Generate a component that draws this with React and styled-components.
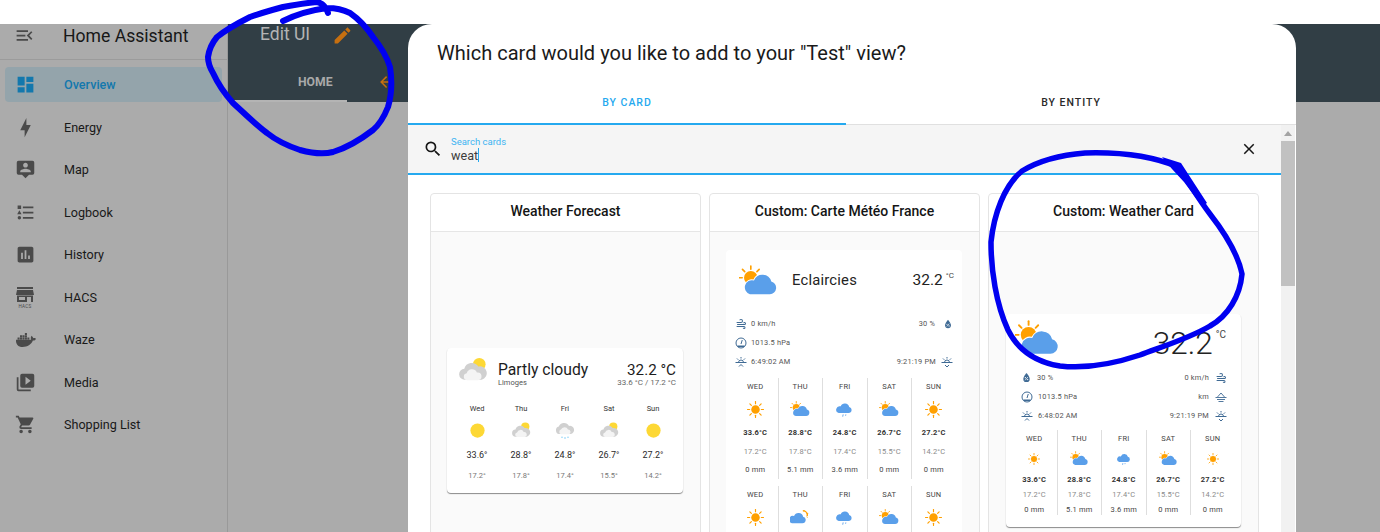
import React from "react";
import styled, { createGlobalStyle } from "styled-components";
import { FaDocker } from "react-icons/fa";

const Global = createGlobalStyle`
  html, body { margin: 0; padding: 0; height: 532px; overflow: hidden; background: #fff; }
  body { font-family: Roboto, "Liberation Sans", sans-serif; }
  * { box-sizing: border-box; }
`;

const P = {
  menu: "M21,15.61L19.59,17L14.58,12L19.59,7L21,8.39L17.44,12L21,15.61M3,6H16V8H3V6M3,13V11H13V13H3M3,18V16H16V18H3Z",
  overview: "M13,3V9H21V3M13,21H21V11H13M3,21H11V15H3M3,13H11V3H3V13Z",
  energy: "M11 15H6L13 1V9H18L11 23V15Z",
  map: "M20,2H4A2,2 0 0,0 2,4V16A2,2 0 0,0 4,18H8L12,22L16,18H20A2,2 0 0,0 22,16V4A2,2 0 0,0 20,2M12,4.3C13.5,4.3 14.7,5.5 14.7,7C14.7,8.5 13.5,9.7 12,9.7C10.5,9.7 9.3,8.5 9.3,7C9.3,5.5 10.5,4.3 12,4.3M18,15H6V14.1C6,12.1 10,11 12,11C14,11 18,12.1 18,14.1V15Z",
  logbook: "M5,9.5L7.5,14H2.5L5,9.5M3,4H7V8H3V4M5,20A2,2 0 0,0 7,18A2,2 0 0,0 5,16A2,2 0 0,0 3,18A2,2 0 0,0 5,20M9,5V7H21V5H9M9,19H21V17H9V19M9,13H21V11H9V13Z",
  history: "M19 3H5C3.9 3 3 3.9 3 5V19C3 20.1 3.9 21 5 21H19C20.1 21 21 20.1 21 19V5C21 3.9 20.1 3 19 3M9 17H7V10H9V17M13 17H11V7H13V17M17 17H15V13H17V17Z",
  media: "M4,6H2V20A2,2 0 0,0 4,22H18V20H4V6M20,2H8A2,2 0 0,0 6,4V16A2,2 0 0,0 8,18H20A2,2 0 0,0 22,16V4A2,2 0 0,0 20,2M12,14.5V5.5L18,10L12,14.5Z",
  cart: "M17,18C15.89,18 15,18.89 15,20A2,2 0 0,0 17,22A2,2 0 0,0 19,20C19,18.89 18.1,18 17,18M1,2V4H3L6.6,11.59L5.24,14.04C5.09,14.32 5,14.65 5,15A2,2 0 0,0 7,17H19V15H7.42A0.25,0.25 0 0,1 7.17,14.75C7.17,14.7 7.18,14.66 7.2,14.63L8.1,13H15.55C16.3,13 16.96,12.58 17.3,11.97L20.88,5.5C20.95,5.34 21,5.17 21,5A1,1 0 0,0 20,4H5.21L4.27,2M7,18C5.89,18 5,18.89 5,20A2,2 0 0,0 7,22A2,2 0 0,0 9,20C9,18.89 8.1,18 7,18Z",
  pencil: "M20.71,7.04C21.1,6.65 21.1,6 20.71,5.63L18.37,3.29C18,2.9 17.35,2.9 16.96,3.29L15.12,5.12L18.87,8.87M3,17.25V21H6.75L17.81,9.93L14.06,6.18L3,17.25Z",
  arrow: "M20,11V13H8L13.5,18.5L12.08,19.92L4.16,12L12.08,4.08L13.5,5.5L8,11H20Z",
  search: "M9.5,3A6.5,6.5 0 0,1 16,9.5C16,11.11 15.41,12.59 14.44,13.73L14.71,14H15.5L20.5,19L19,20.5L14,15.5V14.71L13.73,14.44C12.59,15.41 11.11,16 9.5,16A6.5,6.5 0 0,1 3,9.5A6.5,6.5 0 0,1 9.5,3M9.5,5C7,5 5,7 5,9.5C5,12 7,14 9.5,14C12,14 14,12 14,9.5C14,7 12,5 9.5,5Z",
  close: "M19,6.41L17.59,5L12,10.59L6.41,5L5,6.41L10.59,12L5,17.59L6.41,19L12,13.41L17.59,19L19,17.59L13.41,12L19,6.41Z",
  wind: "M4,10A1,1 0 0,1 3,9A1,1 0 0,1 4,8H12A2,2 0 0,0 14,6A2,2 0 0,0 12,4C11.45,4 10.95,4.22 10.59,4.59C10.2,5 9.56,5 9.17,4.59C8.78,4.2 8.78,3.56 9.17,3.17C9.9,2.45 10.9,2 12,2A4,4 0 0,1 16,6A4,4 0 0,1 12,10H4M19,12A1,1 0 0,0 20,11A1,1 0 0,0 19,10C18.72,10 18.47,10.11 18.29,10.29C17.9,10.68 17.27,10.68 16.88,10.29C16.5,9.9 16.5,9.27 16.88,8.88C17.42,8.34 18.17,8 19,8A3,3 0 0,1 22,11A3,3 0 0,1 19,14H5A1,1 0 0,1 4,13A1,1 0 0,1 5,12H19M18,18H4A1,1 0 0,1 3,17A1,1 0 0,1 4,16H18A3,3 0 0,1 21,19A3,3 0 0,1 18,22C17.17,22 16.42,21.66 15.88,21.12C15.5,20.73 15.5,20.1 15.88,19.71C16.27,19.32 16.9,19.32 17.29,19.71C17.47,19.89 17.72,20 18,20A1,1 0 0,0 19,19A1,1 0 0,0 18,18Z",
};

const Icon = ({ d, size = 24, color = "currentColor" }) => (
  <svg width={size} height={size} viewBox="0 0 24 24" fill={color} style={{ display: "block", flex: "none" }}>
    <path d={d} />
  </svg>
);

const HacsIcon = () => (
  <svg width="21" height="21" viewBox="0 0 21 21" style={{ display: "block" }} fill="#4a4a4a">
    <rect x="2" y="0" width="16" height="2" />
    <path d="M2 3H18L19 8H1Z" />
    <path d="M2 8.6H18V15H2ZM4 10V13H10V10ZM12 10V15H16V10Z" fillRule="evenodd" />
    <text x="10" y="20.5" fontSize="4.6" textAnchor="middle" fontFamily="Roboto" letterSpacing="0.3">HACS</text>
  </svg>
);

const Page = styled.div`
  position: relative; width: 1380px; height: 532px; overflow: hidden;
  display: flex; flex-direction: column; background: #fff;
`;
const TopGap = styled.div`height: 24px; flex: none; background: #fff;`;
const Shell = styled.div`flex: 1; display: flex; min-height: 0; background: #ababab;`;

const Sidebar = styled.aside`
  width: 228px; flex: none; border-right: 1px solid #999; background: #ababab;
`;
const SideHead = styled.div`
  height: 36px; display: flex; align-items: center; padding: 0 0 12px 14px;
  border-bottom: 1px solid #9b9b9b; color: #4a4a4a;
`;
const AppName = styled.div`
  font-size: 17.6px; color: #171717; margin-left: 28px;
`;
const Nav = styled.nav`
  display: flex; flex-direction: column; gap: 7.5px; padding: 7px 5px 0;
`;
const NavItem = styled.div`
  height: 35px; display: flex; align-items: center; gap: 28px; padding-left: 10px;
  border-radius: 4px; font-size: 12.6px;
  font-weight: ${p => (p.$active ? 500 : 400)};
  background: ${p => (p.$active ? "#94a4ab" : "transparent")};
  color: ${p => (p.$active ? "#1378ad" : "#191919")};
`;
const NavGlyph = styled.span`
  width: 21px; height: 21px; flex: none; display: flex; align-items: center; justify-content: center;
  color: ${p => (p.$active ? "#1378ad" : "#4a4a4a")};
`;

const Main = styled.main`flex: 1; min-width: 0;`;
const Header = styled.header`
  height: 78px; background: #313e45; display: flex; flex-direction: column;
`;
const HeadRow = styled.div`
  height: 36px; flex: none; display: flex; align-items: center; padding: 0 0 16px 32px;
  color: #b4b4b4; font-size: 17.5px;
`;
const PencilSlot = styled.span`margin: 3px 0 0 22px; color: #c66f10; display: block;`;
const TabsRow = styled.div`flex: 1; display: flex; align-items: stretch;`;
const HomeTab = styled.div`
  width: 119px; display: flex; align-items: center; justify-content: flex-start;
  padding: 4px 0 0 70px;
  color: #a9a9a9; font-weight: 700; font-size: 12.2px;
  border-bottom: 2px solid #b4b4b4;
`;
const ArrowSlot = styled.span`
  margin-left: 30px; color: #c66f10; display: flex; align-items: center; padding-top: 2px;
`;

const Modal = styled.section`
  position: absolute; left: 408px; top: 24px; width: 888px; bottom: 0;
  background: #fff; border-radius: 24px 24px 0 0; overflow: hidden;
  display: flex; flex-direction: column;
`;
const ModalTitle = styled.h2`
  margin: 0; height: 56px; flex: none; padding: 17px 0 0 29px;
  font-size: 20px; font-weight: 400; line-height: 24px; color: #1a1a1a; letter-spacing: 0.02px;
`;
const Tabs = styled.div`
  display: grid; grid-template-columns: 438px 1fr; height: 45px; flex: none;
  border-bottom: 1px solid #e0e0e0;
`;
const Tab = styled.div`
  display: flex; align-items: center; justify-content: center;
  padding-top: ${p => (p.$active ? "2px" : "0")};
  font-size: 10.5px; font-weight: 500; letter-spacing: 1px;
  color: ${p => (p.$active ? "#25a9ef" : "#2a2a2a")};
  border-bottom: ${p => (p.$active ? "2px solid #25a9ef" : "none")};
  margin-bottom: -1px;
`;
const ModalBody = styled.div`flex: 1; min-height: 0; display: flex;`;
const ScrollArea = styled.div`flex: 1; min-width: 0; display: flex; flex-direction: column; overflow: hidden;`;
const SearchBar = styled.div`
  height: 50px; flex: none; background: #f5f5f5; border-bottom: 2px solid #25a9ef;
  display: flex; align-items: center; padding: 0 23px 1px 15px; color: #161616;
`;
const SearchField = styled.div`flex: 1; margin-left: 8px; display: flex; flex-direction: column;`;
const SearchLabel = styled.label`font-size: 9.5px; line-height: 11px; color: #3db4f2; margin-top: 1px;`;
const SearchValue = styled.div`
  font-size: 12.6px; line-height: 15px; color: #3c3c3c; margin-top: 1px;
  & > i { display: inline-block; width: 1px; height: 14px; background: #25a9ef; vertical-align: -2px; }
`;
const CardGrid = styled.div`
  display: grid; grid-template-columns: repeat(3, 271px); gap: 8px;
  padding: 18px 0 0 22px; align-items: start;
`;
const PickCard = styled.article`
  border: 1px solid #e4e4e4; border-radius: 4px; background: #fff; height: 400px; overflow: hidden;
  display: flex; flex-direction: column;
`;
const PickTitle = styled.h3`
  margin: 0; height: 38px; flex: none; display: flex; align-items: center; justify-content: center;
  padding-bottom: 3px;
  font-size: 14px; font-weight: 500; color: #151515; border-bottom: 1px solid #e6e6e6;
`;
const PickPreview = styled.div`
  flex: 1; background: #fafafa; padding: ${p => p.$top}px 17px 0 ${p => p.$left}px;
`;
const Scrollbar = styled.div`
  width: 14px; flex: none; background: #f1f1f1; display: flex; flex-direction: column; align-items: center;
  margin-right: 1px;
`;
const ScrollUp = styled.div`
  width: 0; height: 0; margin: 6px 0 5px; flex: none;
  border-left: 4px solid transparent; border-right: 4px solid transparent; border-bottom: 5px solid #a3a3a3;
`;
const ScrollThumb = styled.div`width: 100%; height: 145px; background: #c1c1c1;`;

const WeatherCard = styled.div`
  background: #fff; border-radius: 4px; overflow: hidden;
  box-shadow: ${p => (p.$shadow ? "0 1px 1px rgba(0,0,0,.45)" : "none")};
  height: ${p => p.$h}px;
`;

/* HA default card */
const HaTop = styled.div`display: flex; padding: 9px 7px 0 12px; height: 56px;`;
const HaName = styled.div`margin-left: 10px; flex: 1;`;
const HaCond = styled.div`font-size: 15.7px; line-height: 18px; color: #1d1d1d; margin-top: 4px;`;
const HaPlace = styled.div`font-size: 7.5px; line-height: 8px; color: #555;`;
const HaTemps = styled.div`text-align: right;`;
const HaTemp = styled.div`font-size: 15.2px; line-height: 18px; color: #1d1d1d; margin-top: 4px;`;
const HaRange = styled.div`font-size: 8px; line-height: 8px; color: #666;`;
const HaCols = styled.div`
  display: grid; grid-template-columns: repeat(5, 44px); padding-left: 8px;
`;
const HaCol = styled.div`display: flex; flex-direction: column; align-items: center;`;
const HaDay = styled.div`font-size: 7.5px; line-height: 10px; color: #333;`;
const HaSlot = styled.div`height: 24px; margin-top: 4px; display: flex; align-items: center; justify-content: center;`;
const HaHigh = styled.div`font-size: 9px; line-height: 10px; margin-top: 8px; color: #2b2b2b;`;
const HaLow = styled.div`font-size: 7.5px; line-height: 10px; margin-top: 11px; color: #777;`;

/* custom cards */
const MeteoTop = styled.div`
  display: flex; align-items: center; height: ${p => p.$h}px; padding: ${p => p.$pad};
`;
const MeteoName = styled.div`font-size: 14.8px; color: #232323; margin-left: 13px; flex: 1; letter-spacing: 0.2px;`;
const MeteoTemp = styled.div`
  font-size: ${p => p.$size}px; font-weight: ${p => p.$weight}; color: #222; display: flex; align-items: flex-start;
  margin-top: ${p => p.$mt}px;
  & > sup { font-size: ${p => p.$sup}px; font-weight: 400; line-height: 1; margin-left: 3px; margin-top: ${p => p.$supt}px; color: #444; }
`;
const Meta = styled.div`display: flex; flex-direction: column; padding: ${p => p.$pad};`;
const MetaRow = styled.div`
  height: 19px; display: flex; align-items: center; font-size: 7.4px; color: #555;
  justify-content: space-between; letter-spacing: 0.2px;
`;
const MetaSide = styled.span`display: flex; align-items: center; gap: ${p => p.$gap}px;`;
const Rows = styled.div`padding: ${p => p.$pad}; display: flex; flex-direction: column; gap: 7px;`;
const ForecastRow = styled.div`display: grid; grid-template-columns: repeat(5, 44.5px);`;
const ForecastCol = styled.div`
  display: flex; flex-direction: column; align-items: center; height: ${p => p.$h}px;
  border-left: ${p => (p.$first ? "none" : "1.5px solid #dedede")};
`;
const Dow = styled.div`font-size: 7.5px; line-height: 10px; margin-top: 4px; color: #444; letter-spacing: 0.2px;`;
const IconSlot = styled.div`
  height: ${p => p.$h}px; margin-top: ${p => p.$mt}px; display: flex; align-items: center; justify-content: center;
`;
const High = styled.div`font-size: 7.5px; font-weight: 700; line-height: 10px; color: #333; margin-top: ${p => p.$mt}px; letter-spacing: 0.15px;`;
const Low = styled.div`font-size: 7.5px; line-height: 10px; color: #8a8a8a; margin-top: ${p => p.$mt}px; letter-spacing: 0.15px;`;
const Rain = styled.div`font-size: 7.5px; line-height: 10px; color: #444; margin-top: ${p => p.$mt}px; letter-spacing: 0.15px;`;

const Annotation = styled.svg`
  position: absolute; left: 0; top: 0; width: 1380px; height: 532px; pointer-events: none;
`;

/* weather drawings */
const BLUE_CLOUD = "M12 32H34A7 7 0 0 0 35.5 18.2A10 10 0 0 0 16.5 17A7.6 7.6 0 0 0 12 32Z";
const Rays = ({ cx, cy, r1, r2, n = 8, w = 1.8, start = 0 }) =>
  Array.from({ length: n }).map((_, i) => {
    const a = start + (i * 2 * Math.PI) / 8;
    return (
      <line key={i} x1={cx + r1 * Math.cos(a)} y1={cy + r1 * Math.sin(a)} x2={cx + r2 * Math.cos(a)} y2={cy + r2 * Math.sin(a)}
        stroke="#ffa000" strokeWidth={w} strokeLinecap="round" />
    );
  });

const Sunny = ({ size }) => (
  <svg width={size} height={size} viewBox="0 0 32 32" style={{ display: "block" }}>
    <Rays cx={16} cy={16} r1={11} r2={15} w={2.2} />
    <circle cx="16" cy="16" r="8" fill="#ffa000" />
  </svg>
);
const PartSun = ({ w, h }) => (
  <svg width={w} height={h} viewBox="0 0 44 34" style={{ display: "block" }}>
    <Rays cx={13} cy={14} r1={9.5} r2={13} n={6} start={Math.PI} w={1.8} />
    <circle cx="13" cy="14" r="7.5" fill="#ffa000" />
    <path d={BLUE_CLOUD} fill="#fff" stroke="#fff" strokeWidth="2" />
    <path d={BLUE_CLOUD} fill="#5a9fea" />
  </svg>
);
const RainCloud = ({ w, h }) => (
  <svg width={w} height={h} viewBox="6 6 38 36" style={{ display: "block" }}>
    <path d={BLUE_CLOUD} fill="#5a9fea" />
    <line x1="22" y1="35" x2="21" y2="40" stroke="#5a9fea" strokeWidth="2" />
    <line x1="28" y1="35" x2="27.5" y2="38" stroke="#5a9fea" strokeWidth="2" />
  </svg>
);
const NightCloud = ({ w, h }) => (
  <svg width={w} height={h} viewBox="6 2 44 34" style={{ display: "block" }}>
    <path d="M33 5A8 8 0 0 1 42 16A9 9 0 0 0 33 5Z" fill="#ffa000" stroke="#ffa000" strokeWidth="2" />
    <Rays cx={34} cy={14} r1={8} r2={10} n={3} start={-0.3} w={1.4} />
    <path d={BLUE_CLOUD} fill="#5a9fea" transform="translate(-2 -1)" />
  </svg>
);
const HaSun = ({ size }) => (
  <svg width={size} height={size} viewBox="0 0 16 16" style={{ display: "block" }}>
    <circle cx="8" cy="8" r="7.6" fill="#fdd835" />
  </svg>
);
const HaPartly = ({ w, h }) => (
  <svg width={w} height={h} viewBox="0 0 30 25" style={{ display: "block" }}>
    <circle cx="21" cy="7" r="6.5" fill="#fdd835" />
    <path d="M6 23A5.6 5.6 0 0 1 5.5 11.8A8 8 0 0 1 20 9.5A6.8 6.8 0 0 1 23.5 23Z" fill="#d0d0d0" />
    <path d="M8 23.5A3.6 3.6 0 0 1 8 16.4A5.6 5.6 0 0 1 18.5 15.6A4 4 0 0 1 20 23.5Z" fill="#f4f4f4" />
  </svg>
);
const HaRainy = () => (
  <svg width="20" height="20" viewBox="0 0 20 20" style={{ display: "block" }}>
    <path d="M4 14A3.8 3.8 0 0 1 3.8 6.6A5.6 5.6 0 0 1 14 6A4.1 4.1 0 0 1 16 14Z" fill="#d0d0d0" />
    <path d="M6 14.2A2.4 2.4 0 0 1 6 9.6A3.8 3.8 0 0 1 13 9.4A2.5 2.5 0 0 1 14 14.2Z" fill="#f4f4f4" />
    <circle cx="7" cy="17.3" r=".7" fill="#7ccbf5" />
    <circle cx="10" cy="18" r=".8" fill="#7ccbf5" />
    <circle cx="13" cy="17.3" r=".7" fill="#7ccbf5" />
  </svg>
);

/* small meta icons */
const META = "#3f6a94";
const Drop = ({ s }) => (
  <svg width={s} height={s} viewBox="0 0 24 24" style={{ display: "block" }}>
    <path d="M12,2C12,2 5,10 5,15A7,7 0 0 0 19,15C19,10 12,2 12,2Z" fill={META} />
    <path d="M9 18L15 11" stroke="#fff" strokeWidth="1.6" />
    <circle cx="9.5" cy="12.5" r="1.4" fill="#fff" /><circle cx="14.5" cy="16.5" r="1.4" fill="#fff" />
  </svg>
);
const Gauge = ({ s }) => (
  <svg width={s} height={s} viewBox="0 0 24 24" fill="none" stroke={META} strokeWidth="2" style={{ display: "block" }}>
    <circle cx="12" cy="12" r="10" />
    <path d="M12 14L14.5 6" />
    <path d="M5 18.5H19" strokeWidth="3" />
  </svg>
);
const SunLine = ({ s, down }) => (
  <svg width={s} height={s} viewBox="0 0 24 24" fill="none" stroke={META} strokeWidth="2" style={{ display: "block" }}>
    <path d="M7 13A5 5 0 0 1 17 13" />
    <path d="M1 13H23M12 2V5M4 5L6.5 7.5M20 5L17.5 7.5" />
    {down ? <path d="M8 18L12 22L16 18" /> : <path d="M8 21L12 17L16 21" />}
  </svg>
);
const Fog = ({ s }) => (
  <svg width={s} height={s} viewBox="0 0 24 24" fill="none" stroke={META} strokeWidth="1.8" style={{ display: "block" }}>
    <path d="M5 12L12 4L19 12" /><path d="M1 13H23M4 17H20M7 21H17" />
  </svg>
);

const navItems = [
  ["Overview", <Icon d={P.overview} size={21} />, true],
  ["Energy", <Icon d={P.energy} size={21} />],
  ["Map", <Icon d={P.map} size={21} />],
  ["Logbook", <Icon d={P.logbook} size={21} />],
  ["History", <Icon d={P.history} size={21} />],
  ["HACS", <HacsIcon />],
  ["Waze", <FaDocker size={20} />],
  ["Media", <Icon d={P.media} size={21} />],
  ["Shopping List", <Icon d={P.cart} size={21} />],
];

const haDays = [
  ["Wed", <HaSun size={15} />, "33.6°", "17.2°"],
  ["Thu", <HaPartly w={19} h={16} />, "28.8°", "17.8°"],
  ["Fri", <HaRainy />, "24.8°", "17.4°"],
  ["Sat", <HaPartly w={19} h={16} />, "26.7°", "15.5°"],
  ["Sun", <HaSun size={15} />, "27.2°", "14.2°"],
];
const days = [
  ["WED", "33.6°C", "17.2°C", "0 mm", "sun"],
  ["THU", "28.8°C", "17.8°C", "5.1 mm", "part"],
  ["FRI", "24.8°C", "17.4°C", "3.6 mm", "rain"],
  ["SAT", "26.7°C", "15.5°C", "0 mm", "part"],
  ["SUN", "27.2°C", "14.2°C", "0 mm", "sun"],
];
const glyph = (k, big) => {
  if (k === "sun") return <Sunny size={big ? 17 : 12} />;
  if (k === "part") return <PartSun w={big ? 21 : 19} h={big ? 16 : 15} />;
  if (k === "night") return <NightCloud w={21} h={17} />;
  return <RainCloud w={big ? 17 : 14} h={big ? 17 : 14} />;
};

const Forecast = ({ big, h, kinds, slotH, slotT, highT, lowT, rainT, values = true }) => (
  <ForecastRow>
    {days.map((d, i) => (
      <ForecastCol key={d[0]} $first={i === 0} $h={h}>
        <Dow>{d[0]}</Dow>
        <IconSlot $h={slotH} $mt={slotT}>{glyph(kinds ? kinds[i] : d[4], big)}</IconSlot>
        {values && <High $mt={highT}>{d[1]}</High>}
        {values && <Low $mt={lowT}>{d[2]}</Low>}
        {values && <Rain $mt={rainT}>{d[3]}</Rain>}
      </ForecastCol>
    ))}
  </ForecastRow>
);

export default function App() {
  return (
    <Page>
      <Global />
      <TopGap />
      <Shell>
        <Sidebar>
          <SideHead>
            <Icon d={P.menu} size={21} />
            <AppName>Home Assistant</AppName>
          </SideHead>
          <Nav>
            {navItems.map(([label, icon, active]) => (
              <NavItem key={label} $active={active}>
                <NavGlyph $active={active}>{icon}</NavGlyph>
                {label}
              </NavItem>
            ))}
          </Nav>
        </Sidebar>
        <Main>
          <Header>
            <HeadRow>
              Edit UI
              <PencilSlot><Icon d={P.pencil} size={21} /></PencilSlot>
            </HeadRow>
            <TabsRow>
              <HomeTab>HOME</HomeTab>
              <ArrowSlot><Icon d={P.arrow} size={18} /></ArrowSlot>
            </TabsRow>
          </Header>
        </Main>
      </Shell>

      <Modal>
        <ModalTitle>Which card would you like to add to your "Test" view?</ModalTitle>
        <Tabs>
          <Tab $active>BY CARD</Tab>
          <Tab>BY ENTITY</Tab>
        </Tabs>
        <ModalBody>
          <ScrollArea>
            <SearchBar>
              <Icon d={P.search} size={20} />
              <SearchField>
                <SearchLabel>Search cards</SearchLabel>
                <SearchValue>weat<i /></SearchValue>
              </SearchField>
              <Icon d={P.close} size={18} />
            </SearchBar>
            <CardGrid>
              <PickCard>
                <PickTitle>Weather Forecast</PickTitle>
                <PickPreview $top={116} $left={16}>
                  <WeatherCard $shadow $h={145}>
                    <HaTop>
                      <HaPartly w={29} h={25} />
                      <HaName>
                        <HaCond>Partly cloudy</HaCond>
                        <HaPlace>Limoges</HaPlace>
                      </HaName>
                      <HaTemps>
                        <HaTemp>32.2 °C</HaTemp>
                        <HaRange>33.6 °C / 17.2 °C</HaRange>
                      </HaTemps>
                    </HaTop>
                    <HaCols>
                      {haDays.map(d => (
                        <HaCol key={d[0]}>
                          <HaDay>{d[0]}</HaDay>
                          <HaSlot>{d[1]}</HaSlot>
                          <HaHigh>{d[2]}</HaHigh>
                          <HaLow>{d[3]}</HaLow>
                        </HaCol>
                      ))}
                    </HaCols>
                  </WeatherCard>
                </PickPreview>
              </PickCard>

              <PickCard>
                <PickTitle>Custom: Carte Météo France</PickTitle>
                <PickPreview $top={18} $left={16}>
                  <WeatherCard $h={340}>
                    <MeteoTop $h={60} $pad="0 8px 0 13px">
                      <PartSun w={40} h={31} />
                      <MeteoName>Eclaircies</MeteoName>
                      <MeteoTemp $size={15.5} $weight={400} $mt={0} $sup={8} $supt={1}>32.2<sup>°C</sup></MeteoTemp>
                    </MeteoTop>
                    <Meta $pad="4px 9px 0 9px">
                      <MetaRow>
                        <MetaSide $gap={4}><Icon d={P.wind} size={12} color={META} />0 km/h</MetaSide>
                        <MetaSide $gap={8}>30 %<Drop s={10} /></MetaSide>
                      </MetaRow>
                      <MetaRow>
                        <MetaSide $gap={4}><Gauge s={12} />1013.5 hPa</MetaSide>
                      </MetaRow>
                      <MetaRow>
                        <MetaSide $gap={4}><SunLine s={12} />6:49:02 AM</MetaSide>
                        <MetaSide $gap={5}>9:21:19 PM<SunLine s={12} down /></MetaSide>
                      </MetaRow>
                    </Meta>
                    <Rows $pad="7px 0 0 7px">
                      <Forecast big h={101} slotH={20} slotT={7} highT={9} lowT={9} rainT={8} />
                      <Forecast big h={60} slotH={20} slotT={7} values={false} kinds={["sun", "night", "rain", "part", "sun"]} />
                    </Rows>
                  </WeatherCard>
                </PickPreview>
              </PickCard>

              <PickCard>
                <PickTitle>Custom: Weather Card</PickTitle>
                <PickPreview $top={82} $left={17}>
                  <WeatherCard $shadow $h={213}>
                    <MeteoTop $h={53} $pad="0 15px 6px 9px">
                      <PartSun w={46} h={38} />
                      <MeteoName />
                      <MeteoTemp $size={31.5} $weight={300} $mt={12} $sup={10} $supt={5}>32.2<sup>°C</sup></MeteoTemp>
                    </MeteoTop>
                    <Meta $pad="1px 14px 0 15px">
                      <MetaRow>
                        <MetaSide $gap={5}><Drop s={11} />30 %</MetaSide>
                        <MetaSide $gap={6}>0 km/h<Icon d={P.wind} size={12} color={META} /></MetaSide>
                      </MetaRow>
                      <MetaRow>
                        <MetaSide $gap={5}><Gauge s={12} />1013.5 hPa</MetaSide>
                        <MetaSide $gap={6}>km<Fog s={12} /></MetaSide>
                      </MetaRow>
                      <MetaRow>
                        <MetaSide $gap={5}><SunLine s={12} />6:48:02 AM</MetaSide>
                        <MetaSide $gap={6}>9:21:19 PM<SunLine s={12} down /></MetaSide>
                      </MetaRow>
                    </Meta>
                    <Rows $pad="5px 0 0 6px">
                      <Forecast h={85} slotH={18} slotT={6} highT={8} lowT={5} rainT={5} />
                    </Rows>
                  </WeatherCard>
                </PickPreview>
              </PickCard>
            </CardGrid>
          </ScrollArea>
          <Scrollbar>
            <ScrollUp />
            <ScrollThumb />
          </Scrollbar>
        </ModalBody>
      </Modal>

      <Annotation viewBox="0 0 1380 532">
        <path
          d="M283 21C297 14 312 10 327 8C336 8 344 10 350 13C360 20 367 28 373 37C381 47 387 57 390 67C392 80 392 94 388 107C384 117 380 124 373 130C360 140 346 148 333 152C322 155 311 153 300 150C288 146 277 141 267 133C255 124 244 113 233 103C225 94 218 84 213 73C210 68 208 62 208 57C209 50 212 43 217 37C227 29 238 23 250 17C261 13 272 10 283 7C294 5 306 3 317 2C322 3 326 7 328 13"
          fill="none" stroke="#0000f0" strokeWidth="6" strokeLinecap="round" strokeLinejoin="round"
        />
        <path
          d="M1178 167C1150 155 1118 152 1085 153C1060 155 1040 160 1022 171C1004 186 994 214 991 242C991 270 996 304 1008 330C1018 350 1036 362 1060 366C1086 369 1116 363 1140 355C1164 346 1190 338 1210 326C1228 316 1240 296 1242 274C1238 254 1224 232 1210 214C1198 198 1186 178 1178 167"
          fill="none" stroke="#0000f0" strokeWidth="5.5" strokeLinecap="round" strokeLinejoin="round"
        />
        <path d="M1162 157L1181 163L1207 203L1202 206L1184 182L1172 169Z" fill="#0000f0" />
      </Annotation>
    </Page>
  );
}
